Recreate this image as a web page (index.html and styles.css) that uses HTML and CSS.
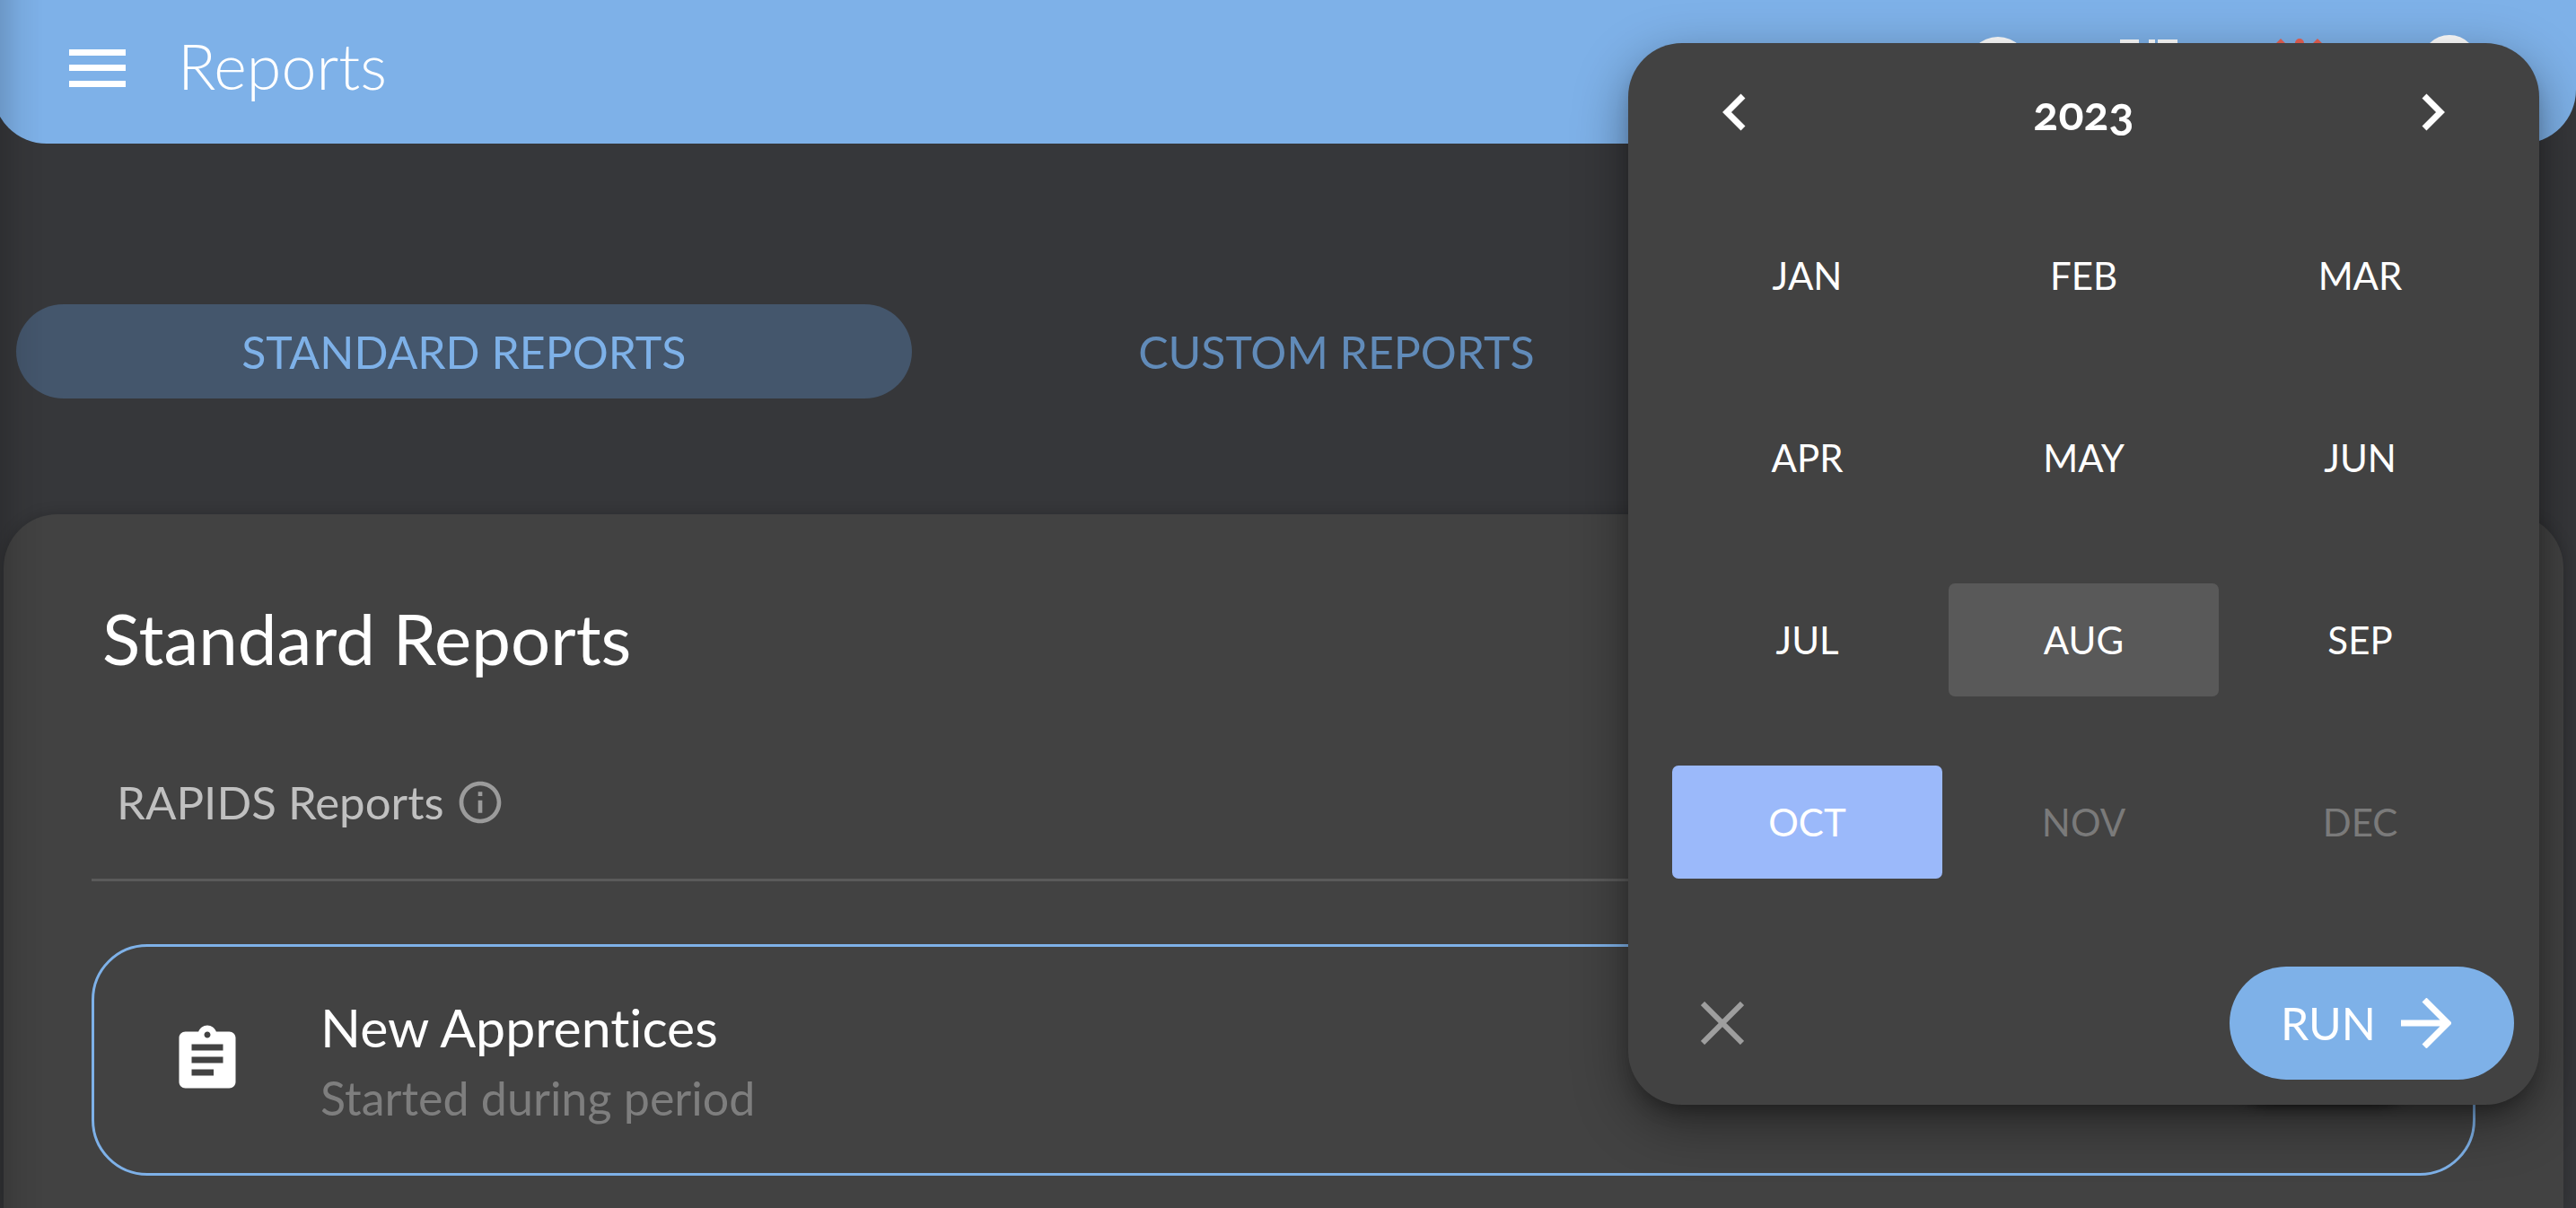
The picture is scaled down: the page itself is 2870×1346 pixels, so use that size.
FILE: index.html
```
<!DOCTYPE html>
<html lang="en">
<head>
    <meta charset="UTF-8">
    <meta name="viewport" content="width=device-width, initial-scale=1.0">
    <title>Reports</title>
    <link rel="stylesheet" href="styles.css">
</head>
<body>
    <header class="topbar">
        <button class="icon-btn" aria-label="Menu">
            <svg class="icon-menu" viewBox="0 0 63 42"><path d="M0 0h63v7H0zM0 17h63v7H0zM0 35h63v7H0z"/></svg>
        </button>
        <h1 class="topbar-title">Reports</h1>
        <nav class="topbar-actions">
            <button class="icon-btn" aria-label="Help">
                <svg class="icon-action" viewBox="0 0 84 84"><circle cx="43" cy="42" r="35"/></svg>
            </button>
            <button class="icon-btn" aria-label="Scan">
                <svg class="icon-action" viewBox="0 0 84 84"><path d="M11 10h21v21H11zM43 10h7v28h-7zM53 10h22v21H53zM11 46h21v21H11zM46 46h29v21H46z"/></svg>
            </button>
            <button class="icon-btn" aria-label="Alerts">
                <svg class="icon-action alert" viewBox="0 0 84 84"><path d="M22 9l10 10-10 10-10-10zM63 9l10 10-10 10-10-10zM38 14a5 5 0 0 1 10 0v14H38zM10 34h64v30H10z"/></svg>
            </button>
            <button class="icon-btn" aria-label="Account">
                <svg class="icon-action" viewBox="0 0 84 84"><circle cx="42" cy="36" r="31"/></svg>
            </button>
        </nav>
    </header>

    <main class="content">
        <div class="tabs" role="tablist">
            <button class="tab active" role="tab" aria-selected="true">STANDARD REPORTS</button>
            <button class="tab" role="tab" aria-selected="false">CUSTOM REPORTS</button>
        </div>

        <section class="card">
            <h2 class="card-title">Standard Reports</h2>
            <div class="group-header">
                <h3 class="group-title">RAPIDS Reports</h3>
                <svg class="icon-info" viewBox="0 0 24 24"><path d="M11 7h2v2h-2zm0 4h2v6h-2zm1-9C6.480 2 2 6.480 2 12s4.480 10 10 10 10-4.480 10-10S17.520 2 12 2zm0 18c-4.410 0-8-3.590-8-8s3.590-8 8-8 8 3.590 8 8-3.590 8-8 8z"/></svg>
            </div>
            <article class="report">
                <svg class="icon-report" viewBox="0 0 24 24"><path d="M19 3h-4.180C14.400 1.840 13.300 1 12 1s-2.400.840-2.820 2H5c-1.100 0-2 .9-2 2v14c0 1.100.9 2 2 2h14c1.100 0 2-.9 2-2V5c0-1.100-.9-2-2-2zm-7 0c.550 0 1 .450 1 1s-.450 1-1 1-1-.450-1-1 .450-1 1-1zm2 14H7v-2h7v2zm3-4H7v-2h10v2zm0-4H7V7h10v2z"/></svg>
                <div class="report-text">
                    <h4 class="report-name">New Apprentices</h4>
                    <p class="report-note">Started during period</p>
                </div>
                <button class="report-open" aria-label="Select month"></button>
            </article>
        </section>
    </main>

    <div class="picker" role="dialog" aria-label="Select month">
        <div class="picker-header">
            <button class="icon-btn" aria-label="Previous year">
                <svg class="icon-chevron" viewBox="0 0 26 42"><path d="M23 3L5 21l18 18"/></svg>
            </button>
            <span class="picker-year">2023</span>
            <button class="icon-btn" aria-label="Next year">
                <svg class="icon-chevron" viewBox="0 0 26 42"><path d="M3 3l18 18L3 39"/></svg>
            </button>
        </div>
        <div class="months">
            <button class="month">JAN</button>
            <button class="month">FEB</button>
            <button class="month">MAR</button>
            <button class="month">APR</button>
            <button class="month">MAY</button>
            <button class="month">JUN</button>
            <button class="month">JUL</button>
            <button class="month hovered">AUG</button>
            <button class="month">SEP</button>
            <button class="month selected">OCT</button>
            <button class="month" disabled>NOV</button>
            <button class="month" disabled>DEC</button>
        </div>
        <div class="picker-footer">
            <button class="icon-btn" aria-label="Close">
                <svg class="icon-close" viewBox="0 0 48 48"><path d="M2 2l44 44M46 2L2 46"/></svg>
            </button>
            <button class="run">
                RUN
                <svg class="icon-arrow" viewBox="0 0 56 56"><path d="M0 28h51M26 2l26 26-26 26"/></svg>
            </button>
        </div>
    </div>
</body>
</html>
```
FILE: styles.css
```
* {
    box-sizing: border-box;
}
body {
    font-family: Lato, "Open Sans", sans-serif;
    font-variant-ligatures: none;
    margin: 0;
    height: 100vh;
    overflow: hidden;
    display: flex;
    flex-direction: column;
    background-color: #36373a;
    color: white;
}
/* shadow of the closed side drawer */
body::before {
    content: "";
    position: fixed;
    top: 0;
    bottom: 0;
    left: 0;
    width: 48px;
    background: linear-gradient(to right, rgba(0, 0, 0, 0.14), rgba(0, 0, 0, 0.04) 50%, transparent);
    pointer-events: none;
}
h1, h2, h3, h4, p {
    margin: 0;
    font-weight: 400;
}
button {
    font-family: inherit;
    color: inherit;
    background: none;
    border: none;
    padding: 0;
    cursor: pointer;
}
svg {
    display: block;
    fill: currentColor;
}
.icon-btn {
    flex: none;
}

/* Top bar */
.topbar {
    display: flex;
    align-items: center;
    height: 160px;
    margin-left: -8px;
    padding: 0 99px 8px 85px;
    background-color: #7eb1e8;
    border-radius: 0 0 60px 60px;
}
.icon-menu {
    width: 63px;
    height: 42px;
}
.topbar-title {
    margin-left: 58px;
    padding-bottom: 6px;
    font-size: 70px;
    font-weight: 300;
}
.topbar-actions {
    display: flex;
    gap: 84px;
    margin-left: auto;
}
.icon-action {
    width: 84px;
    height: 84px;
}
.icon-action.alert {
    color: #ea6153;
}

/* Tabs */
.content {
    flex: 1;
    display: flex;
    flex-direction: column;
}
.tabs {
    display: flex;
    padding: 179px 18px 129px;
}
.tab {
    width: 33.4%;
    height: 105px;
    border-radius: 60px;
    font-size: 50px;
    color: #618bb9;
}
.tab.active {
    width: 35.2%;
    background-color: #44566c;
    color: #7eb1e8;
}

/* Reports card */
.card {
    flex: 1;
    margin: 0 14px 0 4px;
    padding: 96px 98px 0;
    background-color: #424242;
    border-radius: 60px 60px 0 0;
    box-shadow: 0 0 16px rgba(0, 0, 0, 0.2);
}
.card-title {
    padding-left: 12px;
    font-size: 78px;
    line-height: 84px;
}
.group-header {
    display: flex;
    align-items: center;
    gap: 12px;
    margin-top: 111px;
    padding: 0 28px 55px;
    border-bottom: 3px solid #5a5a5a;
}
.group-title {
    font-size: 51px;
    line-height: 60px;
    color: #c0c0c0;
}
.icon-info {
    width: 56px;
    height: 56px;
    color: #9b9b9b;
}
.report {
    display: flex;
    align-items: center;
    margin-top: 70px;
    padding: 48px 64px 48px 84px;
    border: 3px solid #7eb1e8;
    border-radius: 62px;
}
.icon-report {
    width: 84px;
    height: 84px;
}
.report-text {
    margin-left: 84px;
}
.report-name {
    font-size: 59px;
    line-height: 84px;
}
.report-note {
    font-size: 52px;
    line-height: 72px;
    color: #7e7e7e;
}
.report-open {
    width: 206px;
    height: 84px;
    margin-left: auto;
    border-radius: 42px;
    background-color: #424242;
    box-shadow: 0 8px 14px rgba(0, 0, 0, 0.7);
}

/* Month picker */
.picker {
    position: absolute;
    top: 48px;
    right: 41px;
    width: 1015px;
    padding-bottom: 28px;
    background-color: #424242;
    border-radius: 60px;
    box-shadow: 0 14px 20px -8px rgba(0, 0, 0, 0.3), 0 20px 60px rgba(0, 0, 0, 0.4);
}
.picker-header {
    display: flex;
    align-items: center;
    justify-content: space-between;
    padding: 42px 105px 0;
}
.picker-year {
    font-size: 52px;
    line-height: 70px;
    font-weight: 700;
    font-variant-numeric: oldstyle-nums;
}
.icon-chevron {
    width: 26px;
    height: 42px;
    fill: none;
    stroke: currentColor;
    stroke-width: 7;
}
.months {
    display: grid;
    grid-template-columns: repeat(3, 1fr);
    gap: 77px 7px;
    padding: 84px 49px 98px;
}
.month {
    height: 126px;
    border-radius: 7px;
    font-size: 42px;
}
.month.hovered {
    background-color: #595959;
}
.month.selected {
    background-color: #9bb9fa;
}
.month:disabled {
    color: #7a7a7a;
}
.picker-footer {
    display: flex;
    align-items: center;
    justify-content: space-between;
    padding: 0 28px 0 81px;
}
.icon-close {
    width: 48px;
    height: 48px;
    color: #9e9e9e;
    fill: none;
    stroke: currentColor;
    stroke-width: 6;
}
.run {
    display: flex;
    align-items: center;
    gap: 28px;
    height: 126px;
    padding: 0 70px 0 57px;
    border-radius: 63px;
    background-color: #7eb1e8;
    font-size: 50px;
}
.icon-arrow {
    width: 56px;
    height: 56px;
    fill: none;
    stroke: currentColor;
    stroke-width: 7;
}
```
